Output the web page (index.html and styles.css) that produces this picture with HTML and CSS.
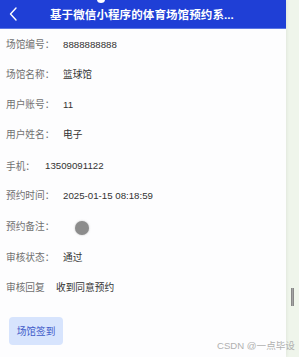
FILE: index.html
```html
<!DOCTYPE html>
<html lang="zh-CN">
<head>
    <meta charset="UTF-8">
    <meta name="viewport" content="width=device-width, initial-scale=1.0">
    <title>预约详情</title>
    <link rel="stylesheet" href="styles.css">
</head>
<body>
    <div class="phone">
        <div class="nav-bar">
            <svg class="back" width="8" height="14" viewBox="0 0 8 14">
                <path d="M7 1 L1.5 7 L7 13" fill="none" stroke="#fff" stroke-width="1.4" stroke-linecap="round" stroke-linejoin="round"/>
            </svg>
            <h1 class="title">基于微信小程序的体育场馆预约系...</h1>
            <span class="notch"></span>
        </div>

        <div class="detail">
            <div class="row"><span class="label">场馆编号：</span><span class="value">8888888888</span></div>
            <div class="row"><span class="label">场馆名称：</span><span class="value">篮球馆</span></div>
            <div class="row"><span class="label">用户账号：</span><span class="value">11</span></div>
            <div class="row"><span class="label">用户姓名：</span><span class="value">电子</span></div>
            <div class="row row-phone"><span class="label">手机：</span><span class="value">13509091122</span></div>
            <div class="row"><span class="label">预约时间：</span><span class="value">2025-01-15 08:18:59</span></div>
            <div class="row row-note"><span class="label">预约备注：</span><span class="dot"></span></div>
            <div class="row"><span class="label">审核状态：</span><span class="value">通过</span></div>
            <div class="row"><span class="label label-short">审核回复</span><span class="value">收到同意预约</span></div>
        </div>

        <button class="sign-btn">场馆签到</button>
    </div>

    <div class="side">
        <span class="thumb"></span>
    </div>

    <div class="watermark">CSDN @一点毕设</div>
</body>
</html>
```

FILE: styles.css
```css
body {
    position: relative;
    margin: 0;
    padding: 0;
    height: 357px;
    overflow: hidden;
    display: flex;
    background-color: #eff5eb;
    font-family: "Liberation Sans", "Noto Sans CJK SC", sans-serif;
}

.phone {
    width: 286px;
    height: 357px;
    background-color: #fdfdfe;
    box-shadow: 1px 0 3px rgba(0, 0, 0, 0.06);
}

.nav-bar {
    position: relative;
    height: 29px;
    background-color: #1f3fd6;
    border-bottom: 1px solid #5b76e4;
    box-sizing: border-box;
    display: flex;
    align-items: center;
}

.back {
    margin-left: 9px;
    margin-top: -1px;
}

.title {
    margin: 0 0 0 33px;
    font-size: 11.5px;
    font-weight: bold;
    color: #ffffff;
    letter-spacing: 0.1px;
}

.notch {
    position: absolute;
    top: -4px;
    left: 97px;
    width: 8px;
    height: 7px;
    border-radius: 50%;
    background-color: #ffffff;
}

.detail {
    display: flex;
    flex-direction: column;
}

.row {
    height: 30px;
    display: flex;
    align-items: center;
    padding-left: 6px;
    font-size: 9.7px;
}

.row-phone {
    margin-top: 2px;
    height: 29px;
}

.row-note {
    height: 32px;
}

.label {
    width: 57px;
    color: #707070;
}

.row-phone .label {
    width: 39px;
}

.label-short {
    width: 50px;
}

.value {
    color: #333333;
}

.dot {
    width: 14px;
    height: 14px;
    margin-left: 12px;
    margin-top: 4px;
    border-radius: 50%;
    background-color: #8c8c8c;
    box-shadow: 0 0 2px rgba(140, 140, 140, 0.6);
}

.sign-btn {
    display: block;
    margin: 15px 0 0 9px;
    width: 54px;
    height: 28px;
    padding: 0;
    border: none;
    border-radius: 4px;
    background-color: #d7e4fd;
    color: #3f5bc9;
    font-family: inherit;
    font-size: 9.7px;
}

.side {
    flex: 1;
    position: relative;
}

.thumb {
    position: absolute;
    top: 288px;
    left: 5px;
    width: 3px;
    height: 18px;
    background-color: #a4a4a4;
    border-left: 1px solid #888;
    border-right: 1px solid #888;
    box-sizing: border-box;
}

.watermark {
    position: absolute;
    left: 217px;
    top: 338px;
    white-space: nowrap;
    font-size: 9.6px;
    color: #b0b0b0;
}
```
